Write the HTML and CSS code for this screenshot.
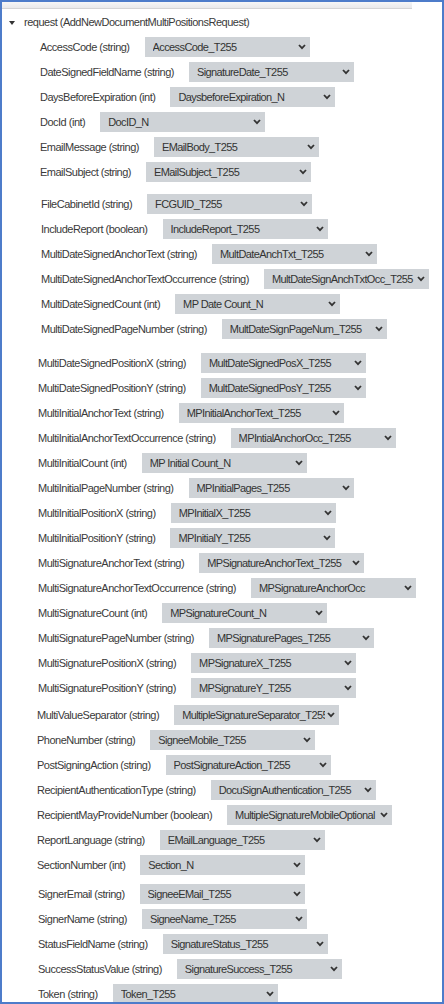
FILE: index.html
```html
<!DOCTYPE html>
<html lang="en">
<head>
  <meta charset="UTF-8">
  <title>request (AddNewDocumentMultiPositionsRequest)</title>
  <link rel="stylesheet" href="styles.css">
</head>
<body>
  <div class="frame">
    <div class="topbar"></div>

    <div class="node-head">
      <svg class="caret" width="6" height="4" viewBox="0 0 6 4"><polygon points="0,0 6,0 3,4" fill="#333"/></svg>
      <span>request (AddNewDocumentMultiPositionsRequest)</span>
    </div>

    <div class="group g1">
      <div class="row"><span class="name">AccessCode (string)</span><div class="pick"><span>AccessCode_T255</span><svg width="8" height="6" viewBox="0 0 8 6"><polyline points="1,1 4,4.2 7,1"/></svg></div></div>
      <div class="row"><span class="name">DateSignedFieldName (string)</span><div class="pick"><span>SignatureDate_T255</span><svg width="8" height="6" viewBox="0 0 8 6"><polyline points="1,1 4,4.2 7,1"/></svg></div></div>
      <div class="row"><span class="name">DaysBeforeExpiration (int)</span><div class="pick"><span>DaysbeforeExpiration_N</span><svg width="8" height="6" viewBox="0 0 8 6"><polyline points="1,1 4,4.2 7,1"/></svg></div></div>
      <div class="row"><span class="name">DocId (int)</span><div class="pick"><span>DocID_N</span><svg width="8" height="6" viewBox="0 0 8 6"><polyline points="1,1 4,4.2 7,1"/></svg></div></div>
      <div class="row"><span class="name">EmailMessage (string)</span><div class="pick"><span>EMailBody_T255</span><svg width="8" height="6" viewBox="0 0 8 6"><polyline points="1,1 4,4.2 7,1"/></svg></div></div>
      <div class="row"><span class="name">EmailSubject (string)</span><div class="pick"><span>EMailSubject_T255</span><svg width="8" height="6" viewBox="0 0 8 6"><polyline points="1,1 4,4.2 7,1"/></svg></div></div>
    </div>

    <div class="group g2">
      <div class="row"><span class="name">FileCabinetId (string)</span><div class="pick"><span>FCGUID_T255</span><svg width="8" height="6" viewBox="0 0 8 6"><polyline points="1,1 4,4.2 7,1"/></svg></div></div>
      <div class="row"><span class="name">IncludeReport (boolean)</span><div class="pick"><span>IncludeReport_T255</span><svg width="8" height="6" viewBox="0 0 8 6"><polyline points="1,1 4,4.2 7,1"/></svg></div></div>
      <div class="row"><span class="name">MultiDateSignedAnchorText (string)</span><div class="pick"><span>MultDateAnchTxt_T255</span><svg width="8" height="6" viewBox="0 0 8 6"><polyline points="1,1 4,4.2 7,1"/></svg></div></div>
      <div class="row"><span class="name">MultiDateSignedAnchorTextOccurrence (string)</span><div class="pick"><span>MultDateSignAnchTxtOcc_T255</span><svg width="8" height="6" viewBox="0 0 8 6"><polyline points="1,1 4,4.2 7,1"/></svg></div></div>
      <div class="row"><span class="name">MultiDateSignedCount (int)</span><div class="pick"><span>MP Date Count_N</span><svg width="8" height="6" viewBox="0 0 8 6"><polyline points="1,1 4,4.2 7,1"/></svg></div></div>
      <div class="row"><span class="name">MultiDateSignedPageNumber (string)</span><div class="pick"><span>MultDateSignPageNum_T255</span><svg width="8" height="6" viewBox="0 0 8 6"><polyline points="1,1 4,4.2 7,1"/></svg></div></div>
    </div>

    <div class="group g3">
      <div class="row"><span class="name">MultiDateSignedPositionX (string)</span><div class="pick"><span>MultDateSignedPosX_T255</span><svg width="8" height="6" viewBox="0 0 8 6"><polyline points="1,1 4,4.2 7,1"/></svg></div></div>
      <div class="row"><span class="name">MultiDateSignedPositionY (string)</span><div class="pick"><span>MultDateSignedPosY_T255</span><svg width="8" height="6" viewBox="0 0 8 6"><polyline points="1,1 4,4.2 7,1"/></svg></div></div>
      <div class="row"><span class="name">MultiInitialAnchorText (string)</span><div class="pick"><span>MPInitialAnchorText_T255</span><svg width="8" height="6" viewBox="0 0 8 6"><polyline points="1,1 4,4.2 7,1"/></svg></div></div>
      <div class="row"><span class="name">MultiInitialAnchorTextOccurrence (string)</span><div class="pick"><span>MPIntialAnchorOcc_T255</span><svg width="8" height="6" viewBox="0 0 8 6"><polyline points="1,1 4,4.2 7,1"/></svg></div></div>
      <div class="row"><span class="name">MultiInitialCount (int)</span><div class="pick"><span>MP Initial Count_N</span><svg width="8" height="6" viewBox="0 0 8 6"><polyline points="1,1 4,4.2 7,1"/></svg></div></div>
      <div class="row"><span class="name">MultiInitialPageNumber (string)</span><div class="pick"><span>MPInitialPages_T255</span><svg width="8" height="6" viewBox="0 0 8 6"><polyline points="1,1 4,4.2 7,1"/></svg></div></div>
      <div class="row"><span class="name">MultiInitialPositionX (string)</span><div class="pick"><span>MPInitialX_T255</span><svg width="8" height="6" viewBox="0 0 8 6"><polyline points="1,1 4,4.2 7,1"/></svg></div></div>
      <div class="row"><span class="name">MultiInitialPositionY (string)</span><div class="pick"><span>MPInitialY_T255</span><svg width="8" height="6" viewBox="0 0 8 6"><polyline points="1,1 4,4.2 7,1"/></svg></div></div>
      <div class="row"><span class="name">MultiSignatureAnchorText (string)</span><div class="pick"><span>MPSignatureAnchorText_T255</span><svg width="8" height="6" viewBox="0 0 8 6"><polyline points="1,1 4,4.2 7,1"/></svg></div></div>
      <div class="row"><span class="name">MultiSignatureAnchorTextOccurrence (string)</span><div class="pick"><span>MPSignatureAnchorOcc</span><svg width="8" height="6" viewBox="0 0 8 6"><polyline points="1,1 4,4.2 7,1"/></svg></div></div>
      <div class="row"><span class="name">MultiSignatureCount (int)</span><div class="pick"><span>MPSignatureCount_N</span><svg width="8" height="6" viewBox="0 0 8 6"><polyline points="1,1 4,4.2 7,1"/></svg></div></div>
      <div class="row"><span class="name">MultiSignaturePageNumber (string)</span><div class="pick"><span>MPSignaturePages_T255</span><svg width="8" height="6" viewBox="0 0 8 6"><polyline points="1,1 4,4.2 7,1"/></svg></div></div>
      <div class="row"><span class="name">MultiSignaturePositionX (string)</span><div class="pick"><span>MPSignatureX_T255</span><svg width="8" height="6" viewBox="0 0 8 6"><polyline points="1,1 4,4.2 7,1"/></svg></div></div>
      <div class="row"><span class="name">MultiSignaturePositionY (string)</span><div class="pick"><span>MPSignatureY_T255</span><svg width="8" height="6" viewBox="0 0 8 6"><polyline points="1,1 4,4.2 7,1"/></svg></div></div>
    </div>

    <div class="group g4">
      <div class="row"><span class="name">MultiValueSeparator (string)</span><div class="pick"><span>MultipleSignatureSeparator_T255</span><svg width="8" height="6" viewBox="0 0 8 6"><polyline points="1,1 4,4.2 7,1"/></svg></div></div>
      <div class="row"><span class="name">PhoneNumber (string)</span><div class="pick"><span>SigneeMobile_T255</span><svg width="8" height="6" viewBox="0 0 8 6"><polyline points="1,1 4,4.2 7,1"/></svg></div></div>
      <div class="row"><span class="name">PostSigningAction (string)</span><div class="pick"><span>PostSignatureAction_T255</span><svg width="8" height="6" viewBox="0 0 8 6"><polyline points="1,1 4,4.2 7,1"/></svg></div></div>
      <div class="row"><span class="name">RecipientAuthenticationType (string)</span><div class="pick"><span>DocuSignAuthentication_T255</span><svg width="8" height="6" viewBox="0 0 8 6"><polyline points="1,1 4,4.2 7,1"/></svg></div></div>
      <div class="row"><span class="name">RecipientMayProvideNumber (boolean)</span><div class="pick"><span>MultipleSignatureMobileOptional</span><svg width="8" height="6" viewBox="0 0 8 6"><polyline points="1,1 4,4.2 7,1"/></svg></div></div>
      <div class="row"><span class="name">ReportLanguage (string)</span><div class="pick"><span>EMailLanguage_T255</span><svg width="8" height="6" viewBox="0 0 8 6"><polyline points="1,1 4,4.2 7,1"/></svg></div></div>
      <div class="row"><span class="name">SectionNumber (int)</span><div class="pick"><span>Section_N</span><svg width="8" height="6" viewBox="0 0 8 6"><polyline points="1,1 4,4.2 7,1"/></svg></div></div>
    </div>

    <div class="group g5">
      <div class="row"><span class="name">SignerEmail (string)</span><div class="pick"><span>SigneeEMail_T255</span><svg width="8" height="6" viewBox="0 0 8 6"><polyline points="1,1 4,4.2 7,1"/></svg></div></div>
      <div class="row"><span class="name">SignerName (string)</span><div class="pick"><span>SigneeName_T255</span><svg width="8" height="6" viewBox="0 0 8 6"><polyline points="1,1 4,4.2 7,1"/></svg></div></div>
      <div class="row"><span class="name">StatusFieldName (string)</span><div class="pick"><span>SignatureStatus_T255</span><svg width="8" height="6" viewBox="0 0 8 6"><polyline points="1,1 4,4.2 7,1"/></svg></div></div>
      <div class="row"><span class="name">SuccessStatusValue (string)</span><div class="pick"><span>SignatureSuccess_T255</span><svg width="8" height="6" viewBox="0 0 8 6"><polyline points="1,1 4,4.2 7,1"/></svg></div></div>
      <div class="row"><span class="name">Token (string)</span><div class="pick"><span>Token_T255</span><svg width="8" height="6" viewBox="0 0 8 6"><polyline points="1,1 4,4.2 7,1"/></svg></div></div>
    </div>
  </div>
</body>
</html>
```
FILE: styles.css
```css
body {
  margin: 0;
  font-family: 'Liberation Sans', Arial, sans-serif;
  font-size: 11px;
  letter-spacing: -0.5px;
  color: #3a3a3a;
  background-color: #fff;
}
.frame {
  width: 444px;
  height: 1004px;
  box-sizing: border-box;
  border: 2px solid #4d7cca;
  overflow: hidden;
  background-color: #fff;
}
.topbar {
  width: 410px;
  height: 6px;
  background: linear-gradient(#f6f6f7, #e9e9eb);
  border-bottom: 1px solid #d4d4d6;
}
.node-head {
  display: flex;
  align-items: center;
  height: 18px;
  margin-top: 4px;
  padding-left: 7px;
}
.caret {
  margin-right: 9px;
  margin-top: 1px;
}
.group {
  display: flex;
  flex-direction: column;
  gap: 5px;
}
.g1 { margin-top: 6px; padding-left: 38px; }
.g2 { margin-top: 12px; padding-left: 39px; }
.g3 { margin-top: 14px; padding-left: 36px; }
.g4 { margin-top: 7px; padding-left: 35px; }
.g5 { margin-top: 9px; padding-left: 36px; }
.row {
  display: flex;
  align-items: center;
  height: 20px;
}
.name {
  white-space: nowrap;
  margin-right: 15px;
}
.pick {
  display: flex;
  align-items: center;
  flex-shrink: 0;
  width: 165px;
  height: 20px;
  box-sizing: border-box;
  padding: 0 4px 0 8px;
  background-color: #cfd3d7;
  color: #333;
  letter-spacing: -0.6px;
}
.pick span {
  flex: 1;
  overflow: hidden;
  white-space: nowrap;
  margin-right: 2px;
}
.pick svg {
  flex-shrink: 0;
}
.pick polyline {
  fill: none;
  stroke: #333;
  stroke-width: 1.8;
}
```
